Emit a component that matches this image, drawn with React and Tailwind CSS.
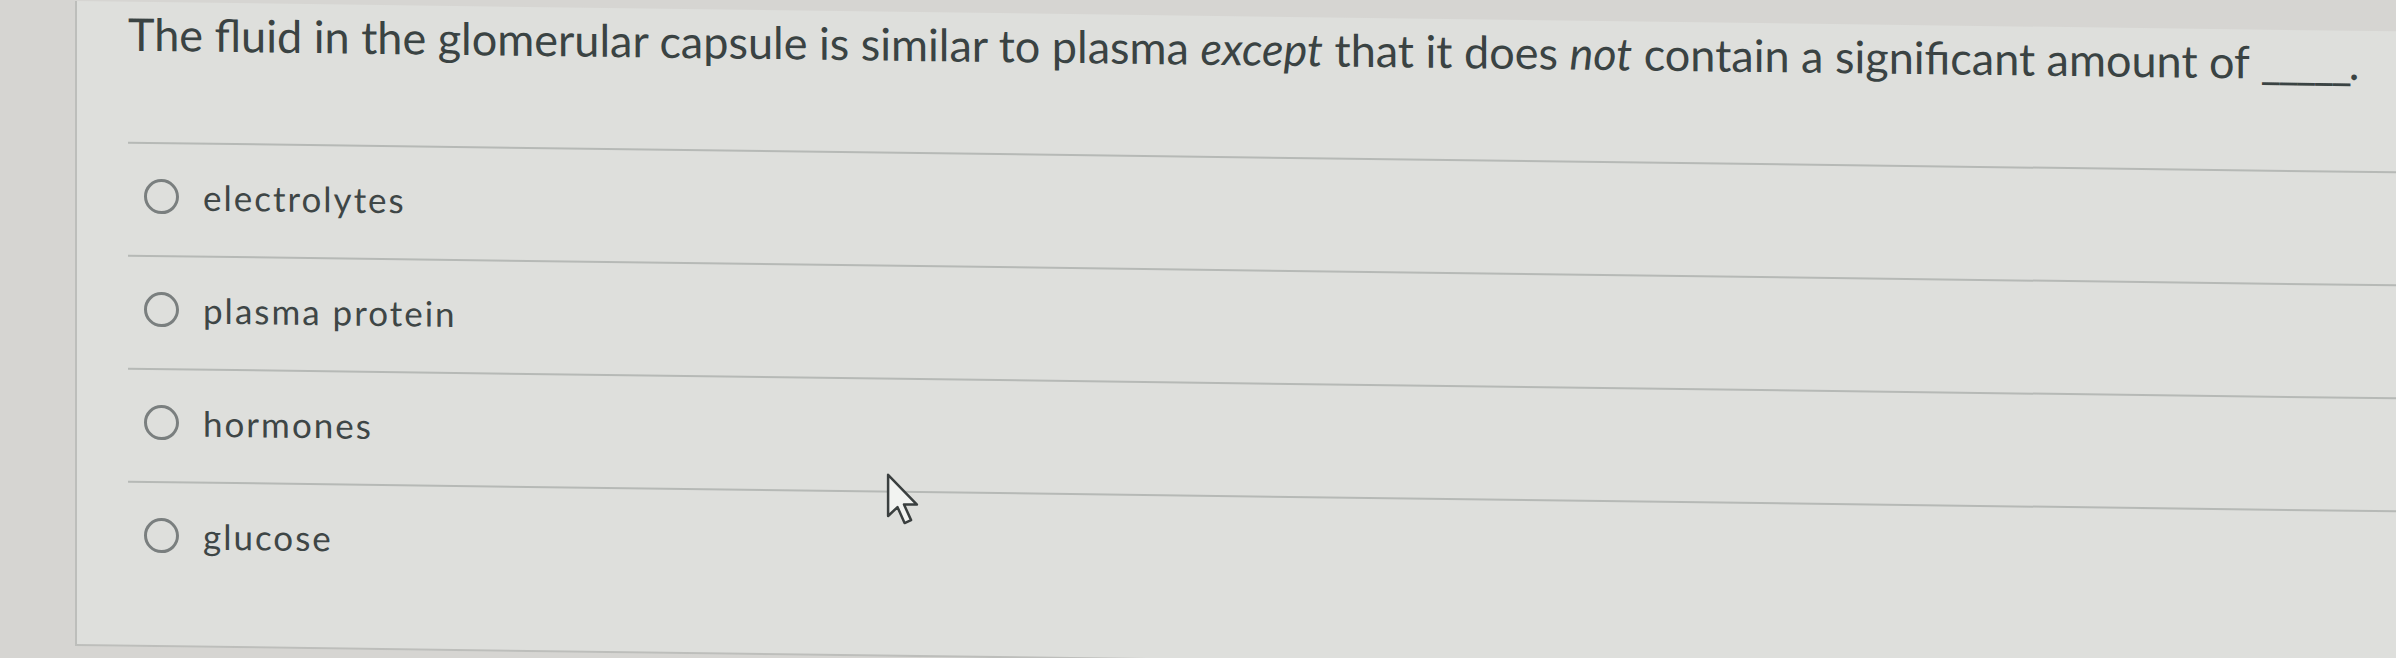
import React from "react";

const options = ["electrolytes", "plasma protein", "hormones", "glucose"];

function Cursor() {
  return (
    <svg
      className="absolute left-[886px] top-[473px]"
      width="36"
      height="53"
      viewBox="0 0 12 18"
      fill="none"
    >
      <path
        d="M0.6 0.6 L0.6 14.6 L3.8 11.6 L6.2 17 L8.4 16 L6 10.7 L10.4 10.7 Z"
        fill="#f2f3f1"
        stroke="#3a3f3f"
        strokeWidth="0.85"
        strokeLinejoin="round"
      />
    </svg>
  );
}

export default function App() {
  return (
    <div
      className="relative w-[2396px] h-[658px] overflow-hidden bg-[#d6d5d2]"
      style={{ fontFamily: "Lato, 'Open Sans', sans-serif" }}
    >
      <div className="origin-top-left skew-y-[0.75deg] pl-[75px]">
        <div className="h-[645px] w-[2400px] border-l-2 border-b-2 border-[#bdbebb] bg-[#dedfdc] pl-[51px] text-[#3a4343]">
          <div className="pt-[5px] h-[140px] whitespace-nowrap text-[45px] leading-[1.2]">
            The fluid in the glomerular capsule is similar to plasma{" "}
            <em>except</em> that it does <em>not</em> contain a significant
            amount of <span className="tracking-[-3px]">_____</span>.
          </div>
          {options.map((o) => (
            <div
              key={o}
              className="flex h-[113px] items-center gap-[24px] border-t-2 border-[#b6b9b6] pb-[7px] pl-[16px]"
            >
              <span className="h-[35px] w-[35px] rounded-full border-[3px] border-[#7a7f7f]" />
              <span className="text-[35px] leading-none tracking-[2px] text-[#3e4646]">
                {o}
              </span>
            </div>
          ))}
        </div>
      </div>
      <Cursor />
    </div>
  );
}
